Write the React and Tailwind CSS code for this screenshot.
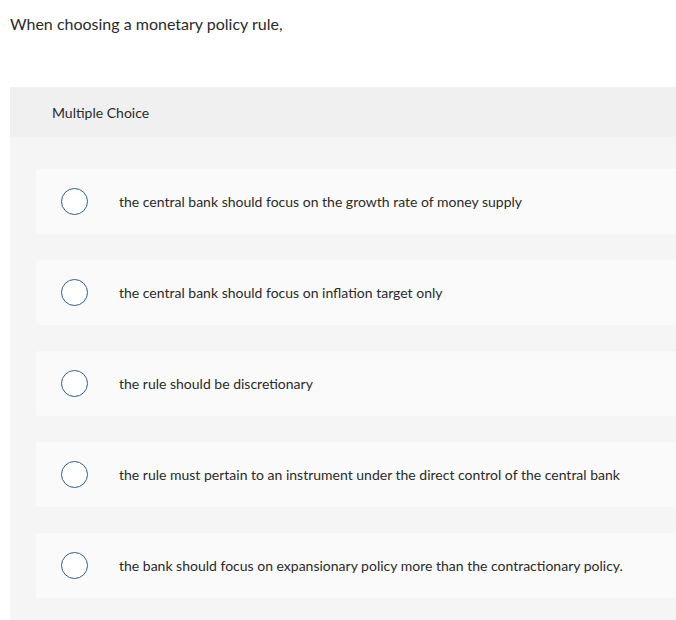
export default function App() {
  const options = [
    "the central bank should focus on the growth rate of money supply",
    "the central bank should focus on inflation target only",
    "the rule should be discretionary",
    "the rule must pertain to an instrument under the direct control of the central bank",
    "the bank should focus on expansionary policy more than the contractionary policy.",
  ];
  return (
    <div className="w-[676px] h-[620px] overflow-hidden bg-white text-[#2a2a2a]" style={{ fontFamily: "Lato, 'Noto Sans', sans-serif" }}>
      <div className="pl-[10px] pt-[14px] h-[87px] text-[16px] leading-[20px]">When choosing a monetary policy rule,</div>
      <div className="ml-[10px] w-[700px] rounded-tl-[3px] bg-[#f5f5f5]">
        <div className="h-[50px] bg-[#f0f0f0] pl-[42px] flex items-center text-[14px]">Multiple Choice</div>
        <div className="pt-[32px] pl-[26px] flex flex-col gap-[26px]">
          {options.map((t) => (
            <div key={t} className="h-[65px] bg-[#fafafa] rounded-l-[3px] flex items-center">
              <div className="ml-[25px] w-[27px] h-[27px] rounded-full border-[1.5px] border-[#2e5f8e] bg-white shrink-0" />
              <div className="ml-[31px] text-[14px]">{t}</div>
            </div>
          ))}
          <div className="h-[40px]" />
        </div>
      </div>
    </div>
  );
}
